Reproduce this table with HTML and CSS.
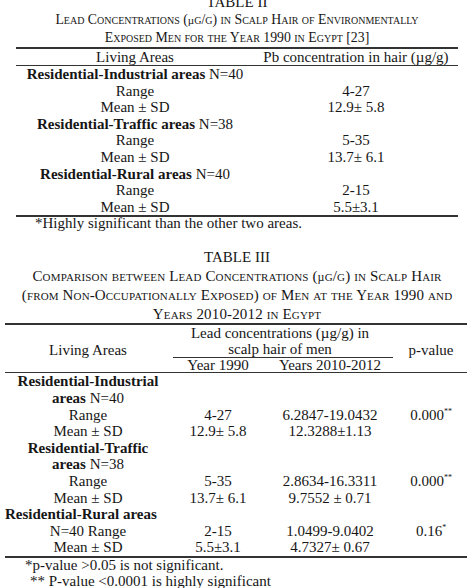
FILE: index.html
```html
<!DOCTYPE html>
<html>
<head>
<meta charset="utf-8">
<link rel="stylesheet" href="styles.css">
</head>
<body>
<div class="page">
  <section class="t2">
    <div class="title">TABLE II</div>
    <div class="caption">Lead Concentrations (<span class="mu">µ</span>g/g) in Scalp Hair of Environmentally<br>Exposed Men for the Year 1990 in Egypt [23]</div>
    <div class="tbl2">
      <div class="row2 head2"><div>Living Areas</div><div>Pb concentration in hair (µg/g)</div></div>
      <div class="row2"><div><b>Residential-Industrial areas</b> N=40</div><div></div></div>
      <div class="row2"><div>Range</div><div>4-27</div></div>
      <div class="row2"><div>Mean ± SD</div><div>12.9± 5.8</div></div>
      <div class="row2"><div><b>Residential-Traffic areas</b> N=38</div><div></div></div>
      <div class="row2"><div>Range</div><div>5-35</div></div>
      <div class="row2"><div>Mean ± SD</div><div>13.7± 6.1</div></div>
      <div class="row2"><div><b>Residential-Rural areas</b> N=40</div><div></div></div>
      <div class="row2"><div>Range</div><div>2-15</div></div>
      <div class="row2"><div>Mean ± SD</div><div>5.5±3.1</div></div>
    </div>
    <p class="note2">*Highly significant than the other two areas.</p>
  </section>

  <section class="t3">
    <div class="title">TABLE III</div>
    <div class="caption">Comparison between Lead Concentrations (<span class="mu">µ</span>g/g) in Scalp Hair<br>(from Non-Occupationally Exposed) of Men at the Year 1990 and<br>Years 2010-2012 in Egypt</div>
    <div class="tbl3">
      <div class="head3">
        <div class="h-living">Living Areas</div>
        <div class="h-lead">
          <div class="h-lead-top">Lead concentrations (µg/g) in<br>scalp hair of men</div>
          <div class="h-years"><div>Year 1990</div><div>Years 2010-2012</div></div>
        </div>
        <div class="h-p">p-value</div>
      </div>
      <div class="row3"><div><b>Residential-Industrial</b></div><div></div><div></div><div></div></div>
      <div class="row3"><div><b>areas</b> N=40</div><div></div><div></div><div></div></div>
      <div class="row3"><div>Range</div><div>4-27</div><div>6.2847-19.0432</div><div>0.000<sup>**</sup></div></div>
      <div class="row3"><div>Mean ± SD</div><div>12.9± 5.8</div><div>12.3288±1.13</div><div></div></div>
      <div class="row3"><div><b>Residential-Traffic</b></div><div></div><div></div><div></div></div>
      <div class="row3"><div><b>areas</b> N=38</div><div></div><div></div><div></div></div>
      <div class="row3"><div>Range</div><div>5-35</div><div>2.8634-16.3311</div><div>0.000<sup>**</sup></div></div>
      <div class="row3"><div>Mean ± SD</div><div>13.7± 6.1</div><div>9.7552 ± 0.71</div><div></div></div>
      <div class="row3"><div class="rural"><b>Residential-Rural areas</b></div><div></div><div></div><div></div></div>
      <div class="row3"><div>N=40 Range</div><div>2-15</div><div>1.0499-9.0402</div><div>0.16<sup>*</sup></div></div>
      <div class="row3"><div>Mean ± SD</div><div>5.5±3.1</div><div>4.7327± 0.67</div><div></div></div>
    </div>
    <p class="note3 n1">*p-value &gt;0.05 is not significant.</p>
    <p class="note3 n2">** P-value &lt;0.0001 is highly significant</p>
  </section>
</div>
</body>
</html>
```

FILE: styles.css
```css
* { box-sizing: border-box; }

html, body {
  margin: 0;
  padding: 0;
  background: #ffffff;
}

body {
  color: #161616;
  font-family: "Liberation Serif", "Times New Roman", serif;
  font-size: 15px;
  overflow: hidden;
}

.page {
  width: 474px;
  margin-top: -7px;
}

.title {
  text-align: center;
  line-height: 18px;
}

.caption {
  text-align: center;
  font-variant: small-caps;
  line-height: 18px;
}

.t2 .caption {
  font-size: 13.8px;
}

.caption .mu {
  font-variant: normal;
  font-size: 0.8em;
}

.t3 .title,
.t3 .caption {
  line-height: 18.5px;
}

.t3 .caption {
  letter-spacing: 0.15px;
}

/* ---------- Table II ---------- */
.tbl2 {
  margin: 0 16px;
  border-top: 2px solid #333333;
  border-bottom: 2px solid #333333;
}

.row2 {
  display: grid;
  grid-template-columns: 238px 1fr;
  text-align: center;
  line-height: 16.6px;
  white-space: nowrap;
}

.head2 {
  line-height: 16px;
  border-bottom: 1.5px solid #333333;
}

.note2 {
  margin: -2px 0 0;
  padding-left: 35px;
  line-height: 16px;
}

/* ---------- Table III ---------- */
.t3 {
  margin-top: 17px;
}

.tbl3 {
  margin-left: 5px;
  width: 462px;
  border-top: 2px solid #333333;
  border-bottom: 2px solid #333333;
}

.head3 {
  display: grid;
  grid-template-columns: 166px 224px 72px;
  align-items: center;
  text-align: center;
  border-bottom: 1.5px solid #333333;
}

.h-living,
.h-p {
  line-height: 16.6px;
  padding-top: 2px;
}

.h-lead-top {
  line-height: 16px;
  margin: 0 2px;
  padding-right: 6px;
  border-bottom: 1.5px solid #333333;
}

.h-years {
  display: grid;
  grid-template-columns: 94px 130px;
  line-height: 14px;
}

.row3 {
  display: grid;
  grid-template-columns: 166px 94px 130px 72px;
  text-align: center;
  line-height: 16.6px;
  white-space: nowrap;
}

.row3 .rural {
  padding-right: 24px;
}

sup {
  font-size: 8px;
  line-height: 0;
  vertical-align: 6px;
}

.note3 {
  margin: 0;
  line-height: 16.6px;
}

.n1 {
  margin-top: -1px;
  padding-left: 25px;
}

.n2 {
  padding-left: 30px;
}
```
